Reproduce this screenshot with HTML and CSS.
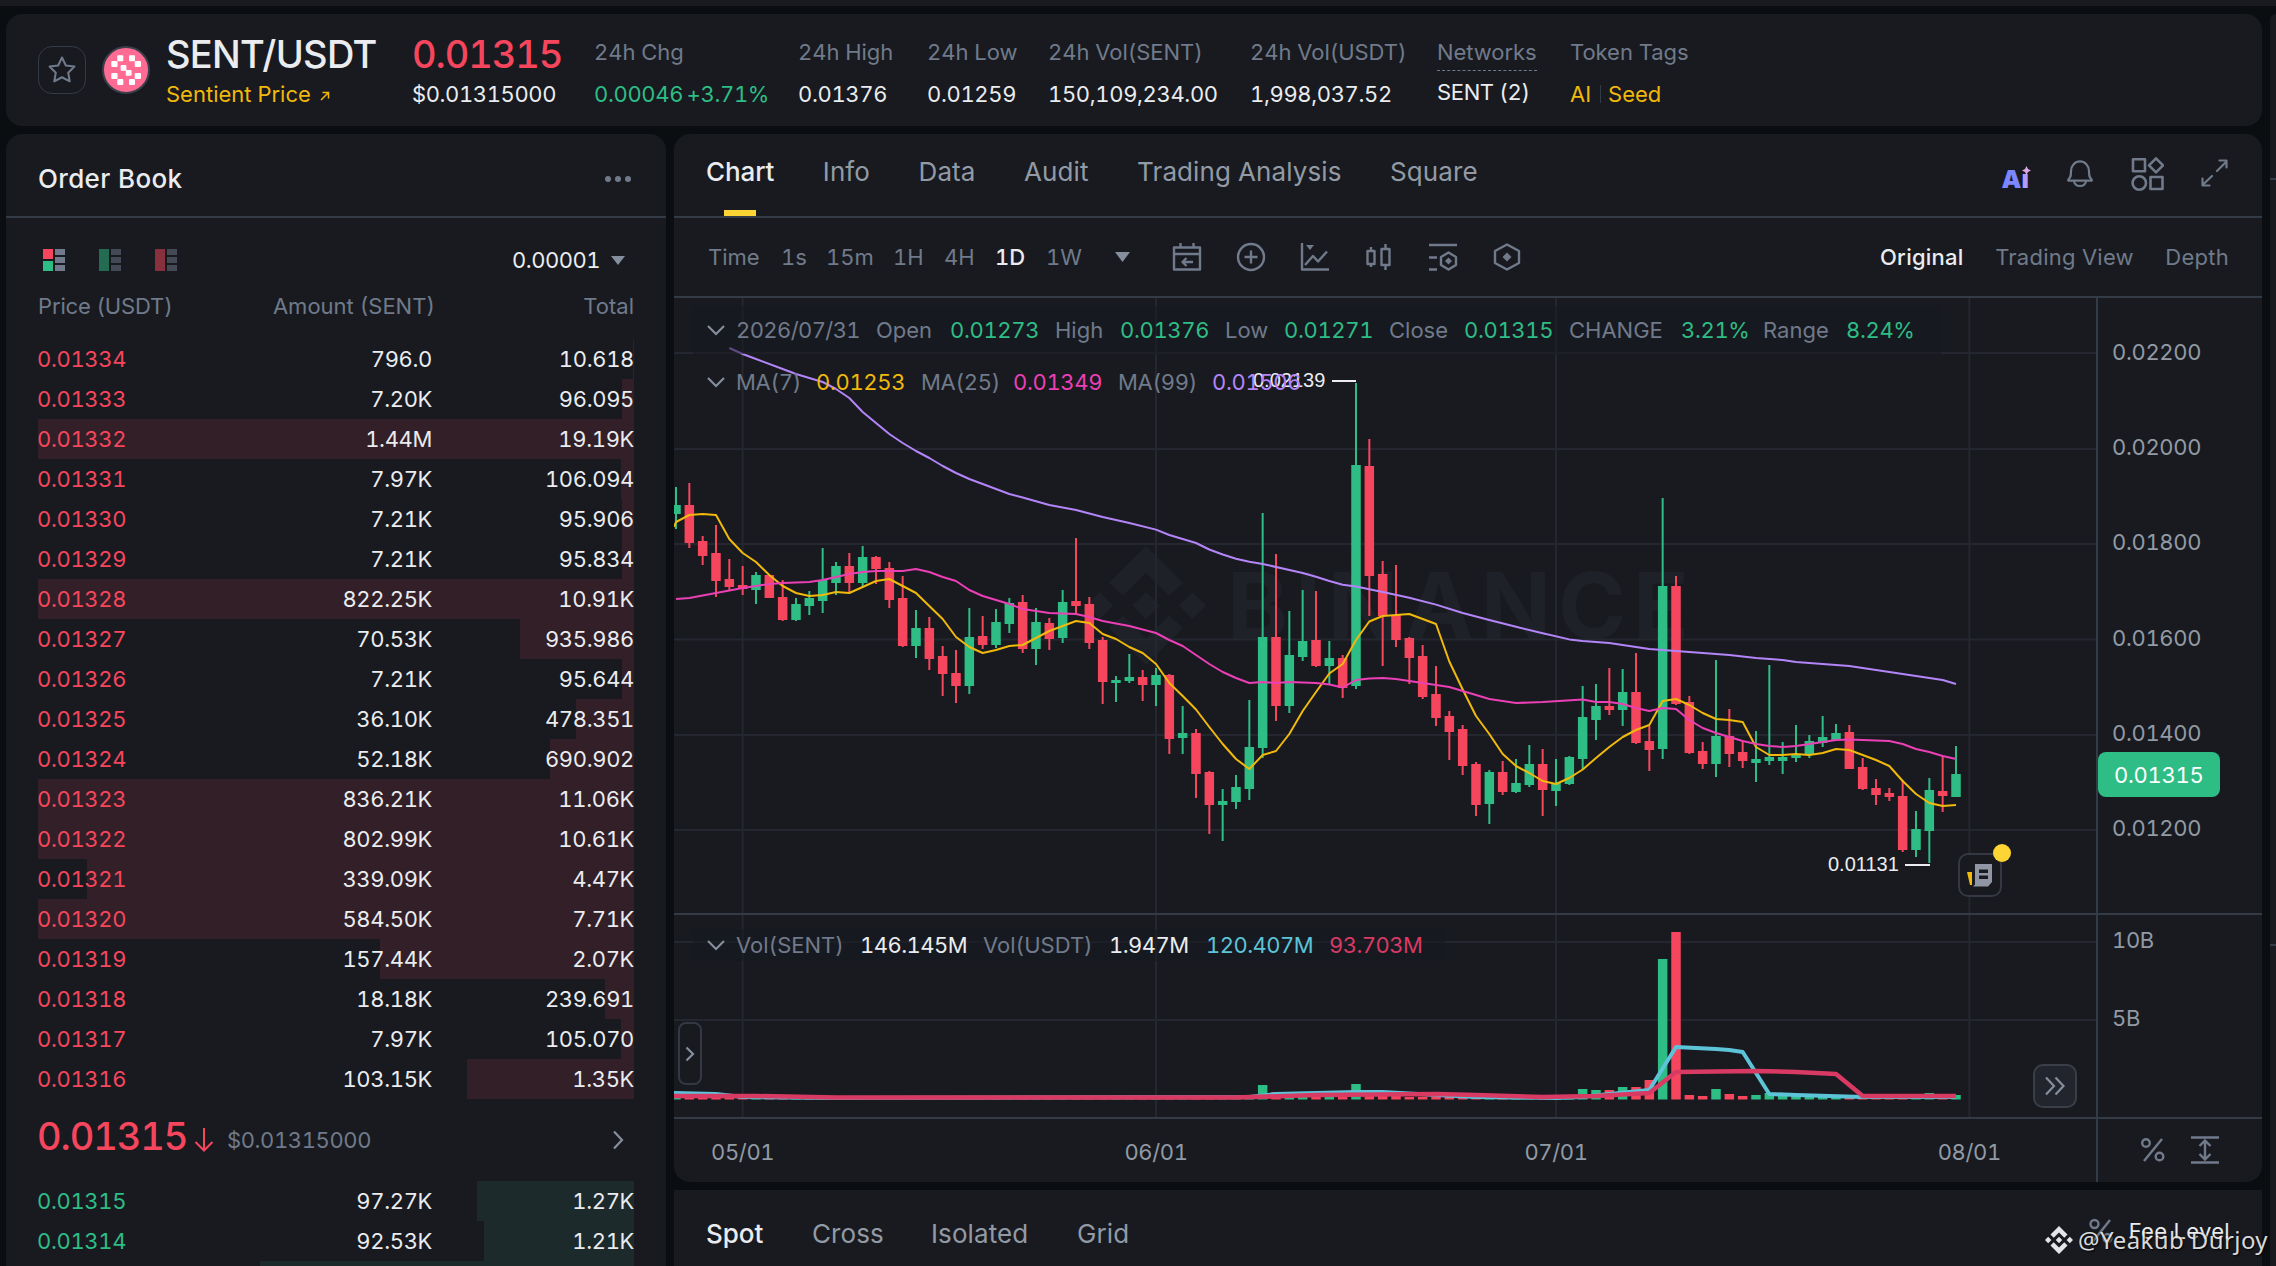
FILE: index.html
```html
<!DOCTYPE html>
<html lang="en">
<head>
<meta charset="utf-8">
<title>SENT/USDT | Spot trading</title>
<link rel="stylesheet" href="styles.css">
</head>
<body>
<div class="strip"></div>
<main class="layout">
  <div class="primary">
    <header class="card ticker">
      <button class="star"><svg width="34" height="34" viewBox="0 0 30 30"><path d="M15 4l3.400 7 7.600 1-5.500 5.400 1.300 7.600-6.800-3.600L8.200 25l1.300-7.600L4 12l7.600-1z" fill="none" stroke="#707a8a" stroke-width="1.800" stroke-linejoin="round"/></svg></button>
      <svg class="coin" width="48" height="48" viewBox="0 0 48 48">
        <circle cx="24" cy="24" r="23" fill="#ff6b93" stroke="#3a3f4a" stroke-width="2"/>
        <g fill="#fff">
          <rect x="15.300" y="9.300" width="6" height="6" rx="1"/><rect x="27" y="9.300" width="6" height="6" rx="1"/>
          <rect x="9.300" y="15" width="6.300" height="6" rx="1"/><rect x="32.700" y="15" width="6.300" height="6" rx="1"/>
          <rect x="18.600" y="19" width="5.800" height="5.800" rx="1"/><rect x="23.800" y="24" width="5.800" height="5.800" rx="1"/>
          <rect x="9.300" y="27" width="6.300" height="6" rx="1"/><rect x="32.700" y="27" width="6.300" height="6" rx="1"/>
          <rect x="15.300" y="33" width="6" height="6" rx="1"/><rect x="27" y="33" width="6" height="6" rx="1"/>
        </g>
      </svg>
      <div class="pair"><h1>SENT/USDT</h1><a>Sentient Price <svg width="10" height="10" viewBox="0 0 10 10"><path d="M1 9l7-7M2.500 1.500h6v6" fill="none" stroke="#f0b90b" stroke-width="1.500"/></svg></a></div>
      <div class="last"><b class="red">0.01315</b><span>$0.01315000</span></div>
      <dl class="stats">
        <div><dt>24h Chg</dt><dd class="green chg">0.00046 +3.71%</dd></div>
        <div><dt>24h High</dt><dd>0.01376</dd></div>
        <div><dt>24h Low</dt><dd>0.01259</dd></div>
        <div><dt>24h Vol(SENT)</dt><dd>150,109,234.00</dd></div>
        <div><dt>24h Vol(USDT)</dt><dd>1,998,037.52</dd></div>
        <div class="networks"><dt>Networks</dt><dd>SENT (2)</dd></div>
        <div><dt>Token Tags</dt><dd class="tags"><span>AI</span><i></i><span>Seed</span></dd></div>
      </dl>
    </header>

    <div class="columns">
      <section class="card book">
        <div class="book-head"><h2>Order Book</h2><svg width="28" height="8" viewBox="0 0 28 8" fill="#707a8a"><circle cx="4" cy="4" r="3"/><circle cx="14" cy="4" r="3"/><circle cx="24" cy="4" r="3"/></svg></div>
        <div class="book-tools">
          <svg width="22" height="22" viewBox="0 0 22 22"><path fill="#f6465d" d="M0 0h10v10H0z"/><path fill="#2ebd85" d="M0 12h10v10H0z"/><path fill="#707a8a" d="M12 0h10v6H12zM12 8h10v6H12zM12 16h10v6H12z"/></svg>
          <svg class="dim" width="22" height="22" viewBox="0 0 22 22"><path fill="#2ebd85" d="M0 0h10v22H0z"/><path fill="#707a8a" d="M12 0h10v6H12zM12 8h10v6H12zM12 16h10v6H12z"/></svg>
          <svg class="dim" width="22" height="22" viewBox="0 0 22 22"><path fill="#f6465d" d="M0 0h10v22H0z"/><path fill="#707a8a" d="M12 0h10v6H12zM12 8h10v6H12zM12 16h10v6H12z"/></svg>
          <span class="tick">0.00001</span>
          <svg width="14" height="9" viewBox="0 0 14 9"><path d="M0 0h14L7 9z" fill="#848e9c"/></svg>
        </div>
        <div class="book-cols"><span>Price (USDT)</span><span>Amount (SENT)</span><span>Total</span></div>
        <div class="rows" id="asks"></div>
        <div class="mid">
          <b>0.01315</b>
          <svg width="20" height="26" viewBox="0 0 20 26"><path d="M10 1v22M1.500 15l8.500 8.500L18.500 15" fill="none" stroke="#f6465d" stroke-width="2"/></svg>
          <span>$0.01315000</span>
          <svg width="12" height="20" viewBox="0 0 12 20"><path d="M2 1.500l8 8.500-8 8.500" fill="none" stroke="#848e9c" stroke-width="2.200"/></svg>
        </div>
        <div class="rows" id="bids"></div>
      </section>

      <div class="side">
        <section class="card chart">
          <nav class="tabs">
            <a class="on">Chart</a><a>Info</a><a>Data</a><a>Audit</a><a>Trading Analysis</a><a>Square</a>
            <div class="tab-icons">
              <span class="ai"><em>A</em><em class="i">ı</em><svg width="9" height="9" viewBox="0 0 9 9"><path d="M4.500 0L6 3l3 1.500L6 6 4.500 9 3 6 0 4.500 3 3z" fill="#dba6e6"/></svg></span>
              <svg width="26" height="28" viewBox="0 0 26 28"><path d="M1.300 20.500c2.700-2.300 2.700-4.500 2.700-8.500a9 9.700 0 0 1 18 0c0 4 0 6.200 2.700 8.500v1.200H1.300zM7 22a6 5 0 0 0 12 0"/></svg>
              <svg class="bold" width="33" height="34" viewBox="0 0 33 34"><rect x="2" y="2.300" width="12" height="12"/><rect x="19.500" y="20" width="12" height="12"/><circle cx="8.300" cy="26" r="6.700"/><path d="M25 1.300l7 7-7 7-7-7z"/></svg>
              <svg width="27" height="28" viewBox="0 0 27 28"><path d="M16 12L25.500 2.500M18.500 1.500h7v7M11 17L1.500 26M1.500 19.500v7h7"/></svg>
            </div>
          </nav>
          <div class="bar">
            <div class="intervals"><a>Time</a><a>1s</a><a>15m</a><a>1H</a><a>4H</a><a class="on">1D</a><a>1W</a></div>
            <svg class="caret" width="15" height="10" viewBox="0 0 15 10"><path d="M0 0h15L7.500 10z" fill="#848e9c"/></svg>
            <div class="tools">
              <svg width="30" height="30" viewBox="0 0 30 30"><path d="M2 5.500h26v22H2zM2 12h26M8.500 1v4.500M21.500 1v4.500M21 20H11M14.500 16l-4 4 4 4"/></svg>
              <svg width="30" height="30" viewBox="0 0 30 30"><circle cx="15" cy="15" r="13"/><path d="M15 8.500v13M8.500 15h13"/></svg>
              <svg width="30" height="30" viewBox="0 0 30 30"><path d="M2 1v26.500h27M5 23l8-9 5 5.500L27 9.500"/><path d="M6 3h8l-4 5z" fill="#707a8a" stroke="none"/></svg>
              <svg width="30" height="30" viewBox="0 0 30 30"><path d="M3.500 9h7v13h-7zM7 5v4M7 22v3M17.500 7h8v16h-8zM21.500 2v5M21.500 23v5"/></svg>
              <svg width="30" height="30" viewBox="0 0 30 30"><path d="M1 3h28M1 15.500h8M1 27.500h8M20.500 10.500l7.500 4.500v8l-7.500 4.500-7.500-4.500v-8z"/><path d="M20.500 15.500l3.500 3.500-3.500 3.500-3.500-3.500z" fill="#707a8a" stroke="none"/></svg>
              <svg width="30" height="30" viewBox="0 0 30 30"><path d="M15 2.500L27 9v12l-12 6.500L3 21V9z"/><path d="M15 10.500l4.500 4.500-4.500 4.500-4.500-4.500z" fill="#707a8a" stroke="none"/></svg>
            </div>
            <div class="views"><a class="on">Original</a><a>Trading View</a><a>Depth</a></div>
          </div>
          <div class="plot">
            <svg id="plot" width="1588" height="884" viewBox="674 298 1588 884"></svg>
            <div class="legend ohlc">
              <svg width="18" height="12" viewBox="0 0 18 12"><path d="M1 2l8 8 8-8"/></svg>
              <span class="date">2026/07/31</span><span>Open</span><b>0.01273</b><span>High</span><b>0.01376</b><span>Low</span><b>0.01271</b><span>Close</span><b>0.01315</b><span>CHANGE</span><b>3.21%</b><span>Range</span><b>8.24%</b>
            </div>
            <div class="legend ma">
              <svg width="18" height="12" viewBox="0 0 18 12"><path d="M1 2l8 8 8-8"/></svg>
              <span>MA(7)</span><b class="yellow">0.01253</b><span>MA(25)</span><b class="pink">0.01349</b><span>MA(99)</span><b class="violet">0.01506</b>
            </div>
            <div class="legend vol">
              <svg width="18" height="12" viewBox="0 0 18 12"><path d="M1 2l8 8 8-8"/></svg>
              <span>Vol(SENT)</span><b class="white">146.145M</b><span>Vol(USDT)</span><b class="white">1.947M</b><b class="cyan">120.407M</b><b class="crimson">93.703M</b>
            </div>
            <div class="price-tag">0.01315</div>
            <button class="handle"><svg width="10" height="16" viewBox="0 0 10 16"><path d="M1.500 1.500L8 8l-6.500 6.500"/></svg></button>
            <button class="news"><svg width="28" height="26" viewBox="0 0 28 26"><path d="M1 10h5v13H4z" fill="#f0b90b"/><path d="M9 2h17v18l-4 4.500H7l2-2z" fill="#9096a3"/><path d="M13 7.500h9v3.500h-9zM13 13.500h9V17h-9z" fill="#181a20"/></svg><i></i></button>
            <button class="forward"><svg width="22" height="20" viewBox="0 0 22 20"><path d="M2 1.500l8 8.500-8 8.500M11.500 1.500l8 8.500-8 8.500"/></svg></button>
          </div>
        </section>

        <section class="card trade">
          <nav><a class="on">Spot</a><a>Cross</a><a>Isolated</a><a>Grid</a></nav>
          <div class="fee"><svg width="24" height="26" viewBox="0 0 24 26"><circle cx="5.500" cy="6" r="4"/><circle cx="18.500" cy="20" r="4"/><path d="M21 2L3.500 24"/></svg><span>Fee Level</span></div>
        </section>
      </div>
    </div>
  </div>
  <aside class="card rail"></aside>
</main>
<div class="credit">
  <svg width="28" height="28" viewBox="0 0 28 28" fill="#e4e5e8"><path d="M14 0l8.500 8.500-3.200 3.200L14 6.400l-5.300 5.300-3.200-3.200zM14 28l8.500-8.500-3.200-3.200L14 21.600l-5.300-5.300-3.200 3.200zM14 10.800l3.200 3.200-3.200 3.200-3.200-3.200zM3.200 10.800L6.400 14l-3.200 3.200L0 14zM24.800 10.800L28 14l-3.200 3.200-3.200-3.200z"/></svg>
  <span>@Yeakub Durjoy</span>
</div>
<script src="chart.js"></script>
</body>
</html>
```
FILE: styles.css
```css
:root {
  --bg: #0b0e11;
  --card: #181a20;
  --line: #333b47;
  --text: #eaecef;
  --muted: #707a8a;
  --soft: #929aa5;
  --green: #2ebd85;
  --red: #f6465d;
  --yellow: #f0b90b;
}
* { box-sizing: border-box; }
html, body { height: 100%; }
body {
  margin: 0;
  background: var(--bg);
  color: var(--text);
  font: 400 22px/1.2 Inter, "Liberation Sans", sans-serif;
  font-variant-numeric: tabular-nums;
  overflow: hidden;
  display: flex;
  flex-direction: column;
  gap: 8px;
}
h1, h2, dl, dt, dd { margin: 0; font-weight: 400; }
button { background: none; border: 0; padding: 0; }
svg { display: block; flex: none; }
.strip { height: 6px; flex: none; background: var(--card); }
.layout { flex: 1; min-height: 0; display: flex; gap: 8px; padding-left: 6px; }
.primary { width: 2256px; flex: none; display: flex; flex-direction: column; gap: 8px; }
.card { background: var(--card); border-radius: 16px; }
.red { color: var(--red); }
.green { color: var(--green); }

/* ticker */
.ticker { height: 112px; flex: none; display: flex; padding: 17px 0 0 32px; white-space: nowrap; }
.star { width: 48px; height: 48px; margin-top: 15px; border: 1px solid var(--line); border-radius: 14px; display: grid; place-items: center; }
.coin { margin: 15px 16px 0 16px; }
.pair { width: 246px; }
.pair h1 { font-size: 38px; font-weight: 500; line-height: 46px; letter-spacing: -0.7px; }
.pair a { display: flex; align-items: center; gap: 9px; line-height: 34px; color: var(--yellow); }
.pair a svg { margin-top: 4px; }
.last { width: 182px; display: flex; flex-direction: column; }
.last b { font-size: 38px; font-weight: 500; line-height: 46px; letter-spacing: -1.1px; }
.last span { line-height: 34px; letter-spacing: -.4px; }
.stats { display: grid; grid-template-columns: 204px 129px 121px 202px 187px 133px 140px; line-height: 42px; }
.stats dt { color: var(--muted); letter-spacing: -.05px; }
.stats dd { letter-spacing: -.35px; }
.stats .chg { word-spacing: -2px; }
.networks dt { display: inline-block; height: 40px; border-bottom: 1px dashed var(--muted); }
.networks dd { line-height: 38px; }
.tags { display: flex; align-items: center; color: var(--yellow); }
.stats .tags { letter-spacing: 0; }
.tags i { width: 1px; height: 18px; background: var(--line); margin: 0 7px 0 9px; }

/* order book */
.columns { flex: 1; min-height: 0; display: flex; gap: 8px; }
.book { width: 660px; flex: none; border-radius: 16px 16px 0 0; overflow: hidden; }
.book-head { height: 84px; padding: 7px 34px 0 32px; border-bottom: 2px solid var(--line); display: flex; align-items: center; justify-content: space-between; }
.book-head h2 { font-size: 26px; font-weight: 500; letter-spacing: .35px; }
.book-tools { height: 60px; margin-top: 12px; padding: 0 41px 0 37px; display: flex; align-items: center; gap: 34px; }
.book-tools .dim { opacity: .5; }
.book-tools .tick { margin-left: auto; margin-right: -23px; letter-spacing: -.5px; }
.book-cols { height: 34px; margin: 0 32px 15px; line-height: 33px; color: var(--muted); display: grid; grid-template-columns: 200px 197px 199px; }
.book-cols span:nth-child(n+2), .rows div span:nth-child(n+2) { text-align: right; }
.book-cols span:first-child { letter-spacing: -.15px; }
.rows { margin: 0 32px; letter-spacing: -.35px; }
.rows div { height: 40px; line-height: 40px; display: grid; grid-template-columns: 200px 194px 202px; background: linear-gradient(var(--depth), var(--depth)) right / var(--w) 100% no-repeat; }
#asks { --depth: #321f27; }
#bids { --depth: #1d2a2b; }
#asks span:first-child { color: var(--red); }
#bids span:first-child { color: var(--green); }
.rows div span:first-child { margin-left: -1px; }
.mid { height: 82px; padding: 0 42px 0 31px; display: flex; align-items: center; }
.mid b { font-size: 38px; font-weight: 500; color: var(--red); width: 157px; margin-top: -6px; letter-spacing: -1.1px; }
.mid span { margin-left: 13px; margin-right: auto; color: var(--muted); letter-spacing: -.4px; }

/* chart */
.side { width: 1588px; display: flex; flex-direction: column; gap: 8px; }
.chart { height: 1048px; flex: none; overflow: hidden; }
.tabs { height: 84px; padding: 0 34px 0 32px; border-bottom: 2px solid var(--line); display: flex; gap: 48.500px; font-size: 26px; color: var(--soft); letter-spacing: .1px; }
.tabs a { height: 82px; line-height: 76px; position: relative; }
.tabs a.on { color: var(--text); font-weight: 500; letter-spacing: -.1px; }
.tabs a.on::after { content: ""; position: absolute; left: 18px; bottom: 0; width: 32px; height: 6px; background: #fcd535; }
.tab-icons { margin-left: auto; display: flex; align-items: center; gap: 37.500px; height: 82px; }
.tab-icons > svg { fill: none; stroke: #707a8a; stroke-width: 2.200; stroke-linecap: round; stroke-linejoin: round; margin-bottom: 4px; }
.tab-icons > .bold { stroke-width: 2.600; margin-bottom: 3px; }
.ai { display: flex; position: relative; width: 28px; font: 900 25px/1 Inter, sans-serif; margin-top: 9px; letter-spacing: 0; }
.ai em { font-style: normal; color: #7b86ff; }
.ai .i { color: #b39afc; }
.ai svg { position: absolute; right: -1px; top: -1px; }
.bar { height: 80px; padding: 0 33px 0 34px; border-bottom: 2px solid var(--line); display: flex; align-items: center; color: var(--muted); }
.intervals { display: grid; grid-template-columns: 73px 45px 67px 51px 51px 51px 69px; }
.on { color: var(--text); }
.intervals .on, .views .on { font-weight: 500; }
.tools { display: flex; gap: 34px; margin-left: 42px; }
.tools svg { fill: none; stroke: #707a8a; stroke-width: 2.400; stroke-linejoin: round; }
.views { margin-left: auto; display: flex; gap: 31.500px; letter-spacing: .25px; }
.plot { position: relative; }
.legend { position: absolute; left: 19px; padding: 0 14px; display: grid; align-items: center; height: 48px; color: var(--muted); background: rgba(24, 26, 32, .55); white-space: nowrap; }
.legend b { font-weight: 400; color: var(--green); letter-spacing: -.35px; }
.legend .date { letter-spacing: -.6px; }
.legend svg, .handle svg, .forward svg { fill: none; stroke: #848e9c; stroke-width: 2.200; }
.ohlc { top: 8px; width: 1248px; grid-template-columns: 29px 140px 74px 105px 65px 105px 59px 105px 75px 105px 112px 82px 83px 90px; }
.ma { top: 60px; background: none; grid-template-columns: 29px 80px 105px 92px 105px 94px 90px; }
.ma span { letter-spacing: -.3px; }
.vol { top: 631px; height: 32px; width: 752px; grid-template-columns: 29px 124px 123px 126px 97px 123px 100px; }
.legend.vol b { letter-spacing: -.55px; }
.legend .yellow { color: var(--yellow); }
.legend .pink { color: #eb40b5; }
.legend .violet { color: #b385f8; }
.legend .white { color: var(--text); }
.legend .cyan { color: #5cc3d8; }
.legend .crimson { color: #d93a63; }
.price-tag { position: absolute; left: 1424px; top: 454px; width: 122px; height: 45px; padding-left: 16px; line-height: 46px; border-radius: 8px; background: var(--green); color: #fff; letter-spacing: -.3px; }
.handle, .news, .forward { position: absolute; display: grid; place-items: center; border: 2px solid #333842; background: var(--card); }
.handle { left: 4px; top: 724px; width: 24px; height: 63px; border-radius: 8px; }
.news { left: 1284px; top: 555px; width: 44px; height: 44px; border-radius: 10px; }
.news i { position: absolute; right: -11px; top: -11px; width: 18px; height: 18px; border-radius: 50%; background: #fcd535; }
.forward { left: 1359px; top: 766px; width: 44px; height: 44px; border-radius: 10px; background: #22252d; border-color: #3a3e46; }
#plot text { font-size: 22px; fill: var(--soft); letter-spacing: -.35px; }
#plot .mark { font: 20px "Liberation Sans", sans-serif; fill: var(--text); letter-spacing: 0; }
#plot .brand { font: 700 92px Inter, sans-serif; fill: #1f2128; letter-spacing: 0; }

/* trade form */
.trade { flex: 1; min-height: 0; border-radius: 0; padding: 0 32px; display: flex; justify-content: space-between; font-size: 26px; color: var(--soft); line-height: 88px; }
.trade nav { display: grid; grid-template-columns: 106px 119px 146px 60px; letter-spacing: .1px; }
.trade .on { font-weight: 500; letter-spacing: 0; }
.fee { display: flex; align-items: center; gap: 16px; height: 82px; font-size: 22px; color: var(--text); letter-spacing: .3px; }
.fee svg { fill: none; stroke: #707a8a; stroke-width: 2.400; }
.rail { flex: 1; border-radius: 16px 0 0 0; background: linear-gradient(var(--line), var(--line)) 0 164px / 100% 2px no-repeat, linear-gradient(var(--line), var(--line)) 0 930px / 100% 2px no-repeat, var(--card); }
.credit { position: absolute; right: 8px; bottom: 10px; display: flex; align-items: center; gap: 5px; font: 24px/32px "Noto Sans", sans-serif; color: rgba(255, 255, 255, .86); letter-spacing: .4px; text-shadow: 1px 1px 2px #000; }
```
FILE: chart.js
```js
// Order book rows: price, amount, total, depth bar width.
const asks = [
  ['0.01334', '796.0', '10.618', 1], ['0.01333', '7.20K', '96.095', 12], ['0.01332', '1.44M', '19.19K', 596],
  ['0.01331', '7.97K', '106.094', 13], ['0.01330', '7.21K', '95.906', 12], ['0.01329', '7.21K', '95.834', 12],
  ['0.01328', '822.25K', '10.91K', 596], ['0.01327', '70.53K', '935.986', 114], ['0.01326', '7.21K', '95.644', 12],
  ['0.01325', '36.10K', '478.351', 58], ['0.01324', '52.18K', '690.902', 84], ['0.01323', '836.21K', '11.06K', 596],
  ['0.01322', '802.99K', '10.61K', 596], ['0.01321', '339.09K', '4.47K', 547], ['0.01320', '584.50K', '7.71K', 596],
  ['0.01319', '157.44K', '2.07K', 254], ['0.01318', '18.18K', '239.691', 29], ['0.01317', '7.97K', '105.070', 13],
  ['0.01316', '103.15K', '1.35K', 167]
];
const bids = [['0.01315', '97.27K', '1.27K', 157], ['0.01314', '92.53K', '1.21K', 150], ['', '', '', 374]];
const row = r => `<div style="--w:${r[3]}px"><span>${r[0]}</span><span>${r[1]}</span><span>${r[2]}</span></div>`;
document.getElementById('asks').innerHTML = asks.map(row).join('');
document.getElementById('bids').innerHTML = bids.map(row).join('');

// Daily candles: direction, high, body top, body bottom, low.
const candles = `G 487 505 514 529|R 483 505 543 548|R 536 541 556 565|R 525 553 581 597|R 559 579 587 591|R 566 585 589 595
G 572 575 590 604|R 575 575 598 598|R 580 597 620 621|G 598 604 620 621|G 591 598 606 615|G 548 580 601 613
G 562 566 583 595|R 553 566 583 592|G 546 557 583 587|R 556 557 569 584|R 562 568 600 608|R 576 598 646 647
G 610 628 646 658|R 617 628 659 670|R 646 656 674 696|R 650 673 686 703|G 608 637 686 694|R 616 636 645 649
G 609 622 645 648|G 598 603 624 633|R 595 602 649 653|G 608 622 649 665|R 618 623 639 650|G 590 602 638 643
R 538 601 606 614|R 597 604 643 649|R 637 640 682 704|G 676 680 683 702|G 654 677 681 683|R 670 677 685 701
G 668 675 685 706|R 674 675 739 754|G 706 733 738 754|R 729 733 774 798|R 771 772 805 834|G 789 801 805 841
G 775 787 802 809|G 700 747 789 800|G 513 637 748 758|R 554 637 706 721|G 611 655 706 713|G 590 641 657 661
R 591 640 666 667|G 641 658 666 684|R 655 658 688 698|G 383 465 686 689|R 439 466 576 616|R 561 574 616 666
R 565 615 640 647|R 637 638 658 684|R 645 656 697 699|R 666 694 718 726|R 711 716 732 760|R 725 729 766 775
R 762 764 805 816|G 770 772 804 824|R 761 772 792 795|G 759 783 792 793|G 745 764 785 787|R 749 764 790 816
G 759 783 791 806|G 756 757 784 785|G 686 717 759 769|G 684 706 720 740|R 668 706 710 715|G 669 692 710 726
R 653 692 743 744|R 726 741 750 771|G 498 586 749 759|R 576 586 704 705|R 696 702 753 754|R 742 751 764 769
G 660 736 764 777|R 709 736 754 767|R 741 752 761 768|G 731 759 763 782|G 665 757 761 765|G 742 757 761 774
G 725 754 758 762|G 735 741 755 758|G 716 737 743 747|G 724 733 740 740|R 725 732 769 769|R 758 767 789 790
R 779 788 795 805|R 788 793 797 801|R 780 796 850 852|G 811 829 850 857|G 778 790 831 863|R 756 791 796 812
G 746 774 797 797`.split(/[|\n]/).map(s => s.split(' '));

const ma7 = [522,515,514,515,539,553,562,575,586,593,596,595,592,593,587,581,579,586,593,606,619,637,647,653,650,646,645,638,631,626,621,623,634,639,647,653,664,683,696,709.5,727,744,759,769,755,751,734,711,692,673.5,664,640,621.5,616,615,614,619,624,661.5,689.5,716,734,754,766,773,781,784,778,769.5,758,747,737,730,725,701,699,705,713,719,720,722,747,755,755,754,755,753,749,750,755,760,766,781,794,803,806,805].map((y, i) => [i, y]);
const ma25 = [[0,599],[1,598],[3,593],[5,588],[7,584],[8,583],[10,582],[11,580],[13,574],[14,572],[15,571],[17,571],[18,569],[19,572],[20,577],[21,581],[22,590],[23,596],[25,604],[26,609],[28,613],[30,614],[31,617],[32,621],[34,626],[36,633],[37,640],[38,646],[39,655],[40,664],[41,672],[42,678],[43,683],[44,682],[45,683],[46,682],[48,683],[49,684.5],[50,687.5],[51,680],[52,678.5],[53,678],[54,679],[55,681],[57,685],[58,687],[59,691],[60,695],[61,699],[62,701],[63,703],[65,702],[68,699.5],[69,702],[70,702],[71,704],[72,708],[73,711],[74,708],[75,709],[76,720],[77,728],[78,733],[79,737],[80,741],[81,744],[82,746],[83,747],[84,746],[85,744],[86,742],[87,740],[88,739.5],[91,741],[92,744],[93,749],[94,752],[95,756],[96,759]];
const ma99 = [[4,348],[5,354],[6,359],[8,369],[9,374],[10,378],[11,382],[12,389],[13,398],[14,412],[15,423],[16,434],[17,443],[18,451],[19,458],[20,466],[21,473],[22,479],[23,484],[24,489],[25,494],[26,497.5],[28,505],[30,510],[32,517],[34,523],[36,529.6],[37,535],[39,543],[40,549.5],[41,554.5],[42,558.7],[43,561.7],[44,564],[47,573],[48,576.7],[49,581],[50,584.7],[51,586.6],[53,592],[55,597.7],[57,604.6],[59,613],[61,620],[63,626.8],[65,633.3],[67,639.4],[68,641],[70,643],[71,645],[73,649],[74,650],[77,653],[79,655],[81,658],[83,660],[84,662],[87,665],[88,666],[90,670],[92,674],[94,678],[95,680],[96,684]];
const vol5 = [[-0.2,1093],[3,1094],[5,1097],[12,1098],[43,1097],[45,1094],[51,1092],[53,1092],[57,1095],[60,1097],[66,1098],[68,1097],[70,1094],[73,1090],[75,1047],[78,1049],[79,1050],[80,1052],[82,1094],[84,1095],[89,1097],[96,1097]];
const vol10 = [[-0.2,1096],[6,1096],[12,1097.5],[42,1097.5],[48,1095],[57,1094],[60,1095],[65,1097],[69,1096],[73,1093],[75,1072],[81,1071],[84,1072],[87,1074],[89,1096],[96,1096]];
const volTops = { 0:1094,1:1095,44:1085,45:1092,46:1095,47:1094,51:1084,52:1090,53:1094,54:1094,68:1089,69:1090,70:1090,71:1087,72:1087,73:1080,74:959,75:932,76:1095,77:1096,78:1089,79:1094,80:1096,81:1095,82:1093,83:1095,84:1095,85:1096,94:1093,95:1094,96:1095 };

const X = i => 676 + i * 40 / 3;
const hline = (y, x2, c) => `<path d="M674 ${y}H${x2}" stroke="${c}" stroke-width="2"/>`;
const curve = (pts, c, w) => `<polyline points="${pts.map(p => X(p[0]).toFixed(1) + ',' + p[1]).join(' ')}" fill="none" stroke="${c}" stroke-width="${w}" stroke-linejoin="round"/>`;
const GRID = '#24272f', LINE = '#333b47';
let s = '';

// brand mark behind the series
s += `<g fill="#1f2128"><path d="M1146 546l37 37-14 12.500-23-23-23 23-14-12.500zM1146 665l37-37-14-12.500-23 23-23-23-14 12.500zM1146 592l13.500 13.500-13.500 13.500-13.500-13.500zM1099.500 592l13.500 13.500-13.500 13.500-13.500-13.500zM1192.500 592l13.500 13.500-13.500 13.500-13.500-13.500z"/></g>`;
s += `<text class="brand" x="1227" y="638.500" textLength="462">BINANCE</text>`;

[353, 449, 544, 639.5, 735, 830, 942, 1020].forEach(y => s += hline(y, 2096, GRID));
[5, 36, 66, 97].forEach(i => s += `<path d="M${X(i)} 298V1117" stroke="${GRID}" stroke-width="2"/>`);

candles.forEach(([d, h, t, b, l], i) => {
  const c = d === 'G' ? '#2ebd85' : '#f6465d', x = X(i);
  s += `<path d="M${x} ${h}V${l}" stroke="${c}" stroke-width="2"/><rect x="${x - 4.75}" y="${t}" width="9.500" height="${Math.max(2, b - t)}" fill="${c}"/>`;
  const v = volTops[i] || 1097;
  s += `<rect x="${x - 4.75}" y="${v}" width="9.500" height="${1099.5 - v}" fill="${c}"/>`;
});
s += curve([[-0.15, 527], ...ma7], '#f0b90b', 2) + curve(ma25, '#eb40b5', 2) + curve(ma99, '#b385f8', 2);
s += curve(vol5, '#5cc3d8', 4) + curve(vol10, '#d93a63', 4.5);

s += `<path d="M1332 381H1356M1905 865H1930" stroke="#eaecef" stroke-width="2"/>`;
s += `<text class="mark" x="1253" y="387">0.02139</text><text class="mark" x="1828" y="871">0.01131</text>`;

s += hline(914, 2262, LINE) + hline(1118, 2262, LINE) + `<path d="M2097 298V1182" stroke="${LINE}" stroke-width="2"/>`;
[['0.02200', 352], ['0.02000', 447], ['0.01800', 542], ['0.01600', 638], ['0.01400', 733], ['0.01200', 828], ['10B', 940], ['5B', 1018]]
  .forEach(([t, y]) => s += `<text x="2112" y="${y + 8}">${t}</text>`);
[['05/01', 5], ['06/01', 36], ['07/01', 66], ['08/01', 97]]
  .forEach(([t, i]) => s += `<text x="${X(i)}" y="1160" text-anchor="middle">${t}</text>`);

// scale controls
s += `<g fill="none" stroke="#707a8a" stroke-width="2.400"><circle cx="2146" cy="1143" r="3.800"/><circle cx="2159.500" cy="1156.500" r="3.800"/><path d="M2162 1139L2144 1161"/><path d="M2191 1137.500H2219M2191 1162.500H2219M2205 1141V1159M2199.500 1146L2205 1140.500L2210.500 1146M2199.500 1154L2205 1159.500L2210.500 1154"/></g>`;
document.getElementById('plot').innerHTML = s;
```
